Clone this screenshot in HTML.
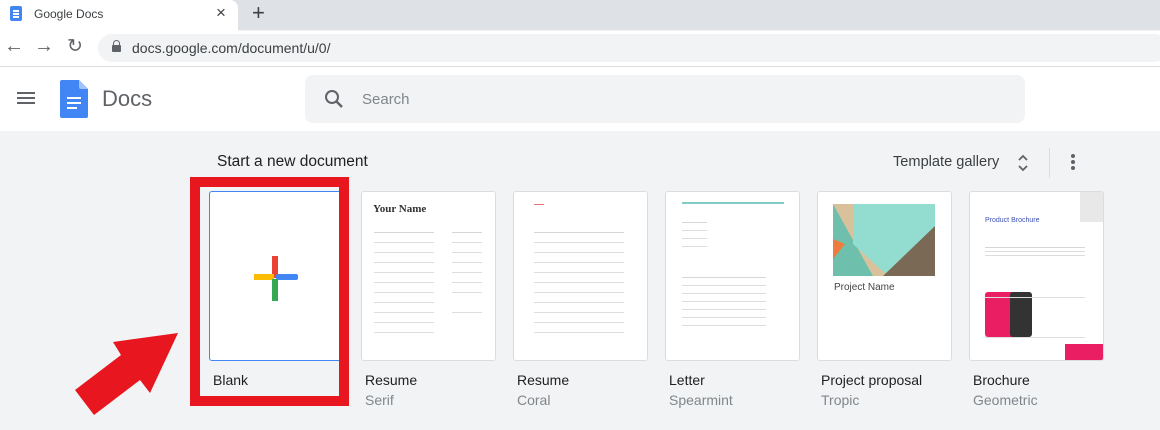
<!DOCTYPE html>
<html><head><style>
*{margin:0;padding:0;box-sizing:border-box}
body{width:1160px;height:430px;overflow:hidden;background:#f1f3f4;font-family:"Liberation Sans",Arial,sans-serif;position:relative;color:#202124}
.abs{position:absolute}
.card{position:absolute;top:191px;width:135px;height:170px;background:#fff;border:1px solid #dadce0;border-radius:3px;overflow:hidden}
.t1{position:absolute;top:372px;font-size:14px;color:#202124}
.t2{position:absolute;top:392px;font-size:14px;color:#80868b}
.ln{position:absolute;height:1px;background:#d5d7da}
</style></head><body>
<div class="abs" style="left:0;top:0;width:1160px;height:30px;background:#dee1e6"></div>
<div class="abs" style="left:0;top:0;width:238px;height:31px;background:#fff;border-radius:0 8px 0 0"></div>
<div class="abs" style="left:10px;top:6px;width:12px;height:15px;background:#4285f4;border-radius:2px"></div>
<div class="abs" style="left:13px;top:10px;width:6px;height:1.5px;background:#fff;box-shadow:0 3px 0 #fff,0 6px 0 #fff"></div>
<div class="abs" style="left:34px;top:7px;font-size:12px;color:#3c4043">Google Docs</div>
<div class="abs" style="left:216px;top:3px;font-size:17px;color:#3c4043">×</div>
<div class="abs" style="left:252px;top:0px;font-size:22px;color:#3c4043">+</div>
<div class="abs" style="left:0;top:31px;width:1160px;height:35px;background:#fff"></div>
<div class="abs" style="left:4px;top:35px;font-size:20px;color:#5f6368">←</div>
<div class="abs" style="left:34px;top:35px;font-size:20px;color:#5f6368">→</div>
<div class="abs" style="left:67px;top:35px;font-size:19px;color:#5f6368">↻</div>
<div class="abs" style="left:98px;top:34px;width:1070px;height:28px;background:#f1f3f4;border-radius:14px"></div>
<div class="abs" style="left:112px;top:45px;width:9px;height:7px;background:#5f6368;border-radius:1px"></div>
<div class="abs" style="left:113px;top:40px;width:7px;height:7px;border:1.5px solid #5f6368;border-radius:4px 4px 0 0"></div>
<div class="abs" style="left:132px;top:40px;font-size:14px;color:#3c4043">docs.google.com/document/u/0/</div>
<div class="abs" style="left:0;top:66px;width:1160px;height:1px;background:#dadce0"></div>
<div class="abs" style="left:0;top:67px;width:1160px;height:64px;background:#fff"></div>
<div class="abs" style="left:17px;top:92px;width:18px;height:2px;background:#5f6368;box-shadow:0 5px 0 #5f6368,0 10px 0 #5f6368"></div>
<svg class="abs" style="left:60px;top:80px" width="28" height="38"><path d="M2 0H19L28 9V36a2 2 0 0 1-2 2H2a2 2 0 0 1-2-2V2a2 2 0 0 1 2-2z" fill="#4285f4"/><path d="M19 0L28 9H21a2 2 0 0 1-2-2z" fill="#a1c2fa"/><rect x="7" y="17" width="14" height="2" fill="#fff"/><rect x="7" y="22" width="14" height="2" fill="#fff"/><rect x="7" y="27" width="10" height="2" fill="#fff"/></svg>
<div class="abs" style="left:102px;top:86px;font-size:22px;color:#5f6368">Docs</div>
<div class="abs" style="left:305px;top:75px;width:720px;height:48px;background:#f1f3f4;border-radius:8px"></div>
<svg class="abs" style="left:324px;top:89px" width="20" height="20"><circle cx="8" cy="8" r="6" fill="none" stroke="#5f6368" stroke-width="2"/><path d="M12.5 12.5L18 18" stroke="#5f6368" stroke-width="2.4"/></svg>
<div class="abs" style="left:362px;top:91px;font-size:15px;color:#80868b">Search</div>
<div class="abs" style="left:217px;top:153px;font-size:15.5px;color:#202124">Start a new document</div>
<div class="abs" style="left:893px;top:154px;font-size:14.6px;color:#3c4043">Template gallery</div>
<svg class="abs" style="left:1017px;top:153px" width="12" height="20"><path d="M2 7L6 3L10 7M2 13L6 17L10 13" fill="none" stroke="#5f6368" stroke-width="1.8"/></svg>
<div class="abs" style="left:1049px;top:148px;width:1px;height:30px;background:#dadce0"></div>
<div class="abs" style="left:1071px;top:154px;width:4px;height:4px;border-radius:2px;background:#5f6368;box-shadow:0 6px 0 #5f6368,0 12px 0 #5f6368"></div>

<div class="card" style="left:209px;border-color:#4285f4"></div>
<div class="abs" style="left:272px;top:256px;width:6px;height:22px;background:#ea4335"></div>
<div class="abs" style="left:254px;top:274px;width:20px;height:6px;background:#fbbc04"></div>
<div class="abs" style="left:276px;top:274px;width:22px;height:6px;background:#4285f4;border-radius:2px"></div>
<div class="abs" style="left:272px;top:279px;width:6px;height:22px;background:#34a853"></div>
<div class="t1" style="left:213px">Blank</div>

<div class="card" style="left:361px">
<div class="abs" style="left:11px;top:11px;font-family:'Liberation Serif',serif;font-weight:bold;font-size:11px;color:#333">Your Name</div>
<div class="ln" style="left:12px;top:40px;width:60px;box-shadow:0 10px 0 #ddd,0 20px 0 #ddd,0 30px 0 #ddd,0 40px 0 #ddd,0 50px 0 #ddd,0 60px 0 #ddd,0 70px 0 #ddd,0 80px 0 #ddd,0 90px 0 #ddd,0 100px 0 #ddd"></div>
<div class="ln" style="left:90px;top:40px;width:30px;box-shadow:0 10px 0 #ddd,0 20px 0 #ddd,0 30px 0 #ddd,0 40px 0 #ddd,0 50px 0 #ddd,0 60px 0 #ddd,0 80px 0 #ddd"></div>
</div>
<div class="t1" style="left:365px">Resume</div><div class="t2" style="left:365px">Serif</div>

<div class="card" style="left:513px">
<div class="ln" style="left:20px;top:12px;width:10px;background:#e57373"></div>
<div class="ln" style="left:20px;top:40px;width:90px;box-shadow:0 10px 0 #ddd,0 20px 0 #ddd,0 30px 0 #ddd,0 40px 0 #ddd,0 50px 0 #ddd,0 60px 0 #ddd,0 70px 0 #ddd,0 80px 0 #ddd,0 90px 0 #ddd,0 100px 0 #ddd"></div>
</div>
<div class="t1" style="left:517px">Resume</div><div class="t2" style="left:517px">Coral</div>

<div class="card" style="left:665px">
<div class="abs" style="left:16px;top:10px;width:102px;height:2px;background:#80cbc4"></div>
<div class="ln" style="left:16px;top:30px;width:25px;box-shadow:0 8px 0 #ddd,0 16px 0 #ddd,0 24px 0 #ddd"></div>
<div class="ln" style="left:16px;top:85px;width:84px;box-shadow:0 8px 0 #ddd,0 16px 0 #ddd,0 24px 0 #ddd,0 32px 0 #ddd,0 40px 0 #ddd,0 48px 0 #ddd"></div>
</div>
<div class="t1" style="left:669px">Letter</div><div class="t2" style="left:669px">Spearmint</div>

<div class="card" style="left:817px">
<svg class="abs" style="left:15px;top:12px" width="102" height="72"><rect width="102" height="72" fill="#6fbfad"/><polygon points="0,0 30,0 70,72 40,72" fill="#d9c29b"/><polygon points="20,0 102,0 102,25 55,72 20,40" fill="#93ddd0"/><polygon points="50,72 102,22 102,72" fill="#7a6a55"/><polygon points="0,35 12,40 0,55" fill="#ee7d3d"/></svg>
<div class="abs" style="left:16px;top:90px;font-size:10px;color:#444">Project Name</div>
</div>
<div class="t1" style="left:821px">Project proposal</div><div class="t2" style="left:821px">Tropic</div>

<div class="card" style="left:969px">
<div class="abs" style="left:15px;top:25px;font-size:7px;color:#3f51b5">Product Brochure</div>
<div class="abs" style="left:15px;top:100px;width:42px;height:45px;background:#e91e63;border-radius:3px"></div>
<div class="abs" style="left:40px;top:100px;width:22px;height:45px;background:#333;border-radius:3px"></div>
<div class="ln" style="left:15px;top:55px;width:100px;box-shadow:0 4px 0 #ddd,0 8px 0 #ddd,0 50px 0 #ddd,0 90px 0 #ddd"></div>
<div class="abs" style="left:95px;top:152px;width:40px;height:18px;background:#e91e63"></div>
<div class="abs" style="left:110px;top:0;width:25px;height:30px;background:#e8e8e8"></div>
</div>
<div class="t1" style="left:973px">Brochure</div><div class="t2" style="left:973px">Geometric</div>

<div class="abs" style="left:190px;top:177px;width:159px;height:229px;border:10px solid #e8161f"></div>
<svg class="abs" style="left:0;top:0" width="1160" height="430"><polygon points="178,333 113,342 121,355 75,390 94,415 140,380 150,393" fill="#e8161f"/></svg>
</body></html>
